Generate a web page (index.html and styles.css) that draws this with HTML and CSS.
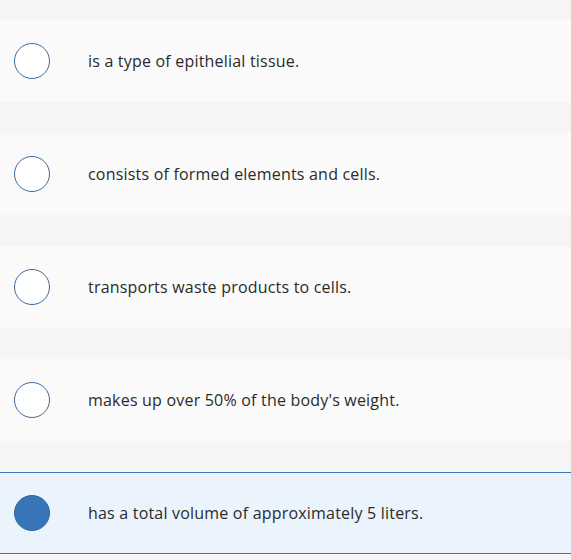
FILE: index.html
```html
<!doctype html>
<html>
<head>
  <meta charset="utf-8">
  <title>Choices</title>
  <link rel="stylesheet" href="styles.css">
</head>
<body>
<ul class="choices">
  <li class="choice"><span class="radio"></span><span class="label">is a type of epithelial tissue.</span></li>
  <li class="choice"><span class="radio"></span><span class="label">consists of formed elements and cells.</span></li>
  <li class="choice"><span class="radio"></span><span class="label">transports waste products to cells.</span></li>
  <li class="choice"><span class="radio"></span><span class="label">makes up over 50% of the body's weight.</span></li>
  <li class="choice selected"><span class="radio"></span><span class="label">has a total volume of approximately 5 liters.</span></li>
</ul>
</body>
</html>
```

FILE: styles.css
```css
body {
  margin: 0;
  background-color: #f5f5f5;
  font-family: "Open Sans", "Liberation Sans", sans-serif;
  color: #2b2b2b;
}

.choices {
  list-style: none;
  margin: 0;
  padding: 20px 0 0;
}

.choice {
  display: flex;
  align-items: center;
  height: 80px;
  margin-bottom: 31px;
  background-color: #fafafa;
  border-top: 1px solid transparent;
  border-bottom: 1px solid transparent;
}

.radio {
  box-sizing: border-box;
  width: 36px;
  height: 36px;
  margin-left: 14px;
  border: 1.5px solid #3a6a9a;
  border-radius: 50%;
  background-color: #fff;
}

.label {
  margin-left: 38px;
  font-size: 16px;
  letter-spacing: 0.2px;
}

.selected {
  background-color: #ebf3fc;
  border-color: #3b76b5;
}

.selected .radio {
  background-color: #3874b8;
  border-color: #33679e;
}
```
